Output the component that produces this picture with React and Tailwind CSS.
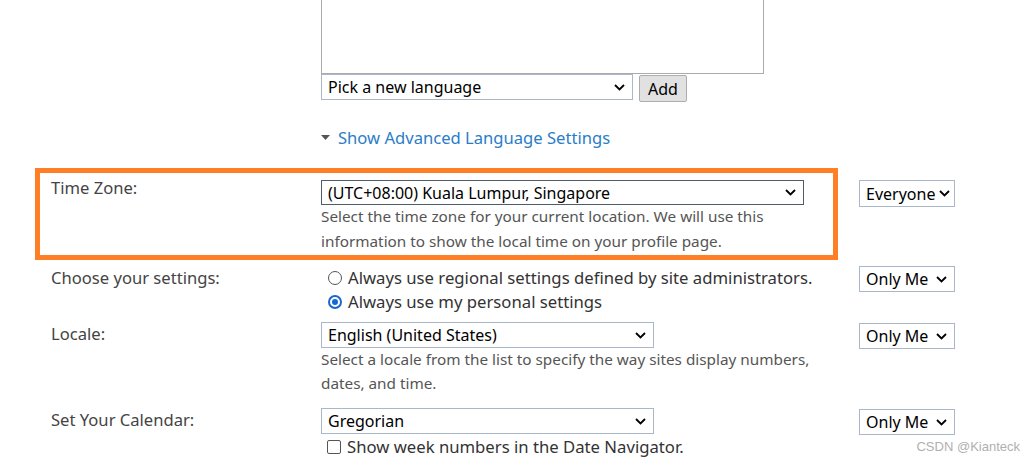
import React from 'react';

const font = { fontFamily: '"Noto Sans", "Open Sans", Arial, sans-serif' };

// Fake Windows-style select box
const Select = ({ value, className }) => (
  <div className={`flex items-center justify-between bg-white border pl-[6px] pr-[7px] text-[16px] text-black ${className}`}>
    <span className="whitespace-nowrap">{value}</span>
    <svg width="11" height="7" viewBox="0 0 11 7" className="shrink-0 ml-[4px]">
      <path d="M1 1l4.5 4.5L10 1" fill="none" stroke="#000" strokeWidth="1.8" />
    </svg>
  </div>
);

const Radio = ({ checked }) =>
  checked ? (
    <span className="inline-flex items-center justify-center w-[14px] h-[14px] rounded-full border-2 border-[#1767d2] bg-white">
      <span className="w-[6px] h-[6px] rounded-full bg-[#1767d2]" />
    </span>
  ) : (
    <span className="inline-block w-[14px] h-[14px] rounded-full border border-[#555] bg-white" />
  );

const Row = ({ label, children, perm, permClass, labelClass, boxClass, rowClass }) => (
  <div className={`flex ${rowClass}`}>
    <div className={`w-[803px] ml-[35px] flex ${boxClass}`}>
      <div className={`w-[270px] shrink-0 text-[16.6px] leading-[24px] text-[#444] ${labelClass}`}>{label}</div>
      <div className="flex-1">{children}</div>
    </div>
    <div className="ml-[21px]">
      <Select value={perm} className={`w-[96px] border-[#a9b8c8] pl-[5px] pr-[6px] ${permClass}`} />
    </div>
  </div>
);

export default function App() {
  return (
    <div className="relative w-[1036px] h-[462px] overflow-hidden bg-white" style={font}>
      {/* language picker */}
      <div className="pl-[321px]">
        <div className="w-[443px] h-[74px] border border-t-0 border-[#ababab]" />
        <div className="flex items-start gap-[6px]">
          <Select value="Pick a new language" className="w-[312px] h-[26px] border-[#a9b8c8]" />
          <button className="w-[48px] h-[27px] mt-[1px] bg-[#e1e1e1] border border-[#adadad] rounded-[2px] text-[16px] text-black leading-none">
            Add
          </button>
        </div>
        <div className="mt-[24px] h-[24px] flex items-center gap-[8px]">
          <svg width="9" height="6" viewBox="0 0 9 6"><path d="M0 0h9L4.5 5z" fill="#555" /></svg>
          <span className="text-[16.6px] text-[#2a7dc8]">Show Advanced Language Settings</span>
        </div>
      </div>

      {/* time zone, highlighted */}
      <Row
        label="Time Zone:"
        perm="Everyone"
        rowClass="mt-[18px]"
        boxClass="border-[5px] border-[#ff7f27] pl-[11px] pt-[7px] h-[92px]"
        labelClass="-mt-[4px]"
        permClass="h-[27px] mt-[12px]"
      >
        <Select value="(UTC+08:00) Kuala Lumpur, Singapore" className="w-[483px] h-[25px] border-[#4d5d6c]" />
        <p className="-mt-[1px] text-[15.3px] leading-[25px] text-[#555]">
          Select the time zone for your current location. We will use this
          <br />
          information to show the local time on your profile page.
        </p>
      </Row>

      {/* regional settings */}
      <Row label="Choose your settings:" perm="Only Me" rowClass="mt-[6px]" boxClass="pl-[16px]" permClass="h-[26px]">
        <div className="text-[16.7px] leading-[24px] text-[#333]">
          <div className="flex items-center gap-[6px] pl-[7px]">
            <Radio />
            <span>Always use regional settings defined by site administrators.</span>
          </div>
          <div className="flex items-center gap-[6px] pl-[7px]">
            <Radio checked />
            <span>Always use my personal settings</span>
          </div>
        </div>
      </Row>

      {/* locale */}
      <Row label="Locale:" perm="Only Me" rowClass="mt-[8px]" boxClass="pl-[16px]" permClass="h-[26px] mt-[1px]">
        <Select value="English (United States)" className="w-[333px] h-[26px] border-[#a9b8c8]" />
        <p className="-mt-[1px] text-[15.3px] leading-[24px] text-[#555]">
          Select a locale from the list to specify the way sites display numbers,
          <br />
          dates, and time.
        </p>
      </Row>

      {/* calendar */}
      <Row label="Set Your Calendar:" perm="Only Me" rowClass="mt-[13px]" boxClass="pl-[16px]" permClass="h-[26px] mt-[1px]">
        <Select value="Gregorian" className="w-[333px] h-[26px] border-[#a9b8c8]" />
        <div className="flex items-center gap-[6px] pl-[6px] pt-[1px] text-[16.7px] leading-[24px] text-[#333]">
          <span className="inline-block w-[14px] h-[14px] rounded-[2px] border border-[#555] bg-white" />
          <span>Show week numbers in the Date Navigator.</span>
        </div>
      </Row>

      <div
        className="absolute right-[16px] bottom-[6px] text-[13px] text-[#b0b0b0]"
        style={{ fontFamily: '"Liberation Sans", Arial, sans-serif' }}
      >
        CSDN @Kianteck
      </div>
    </div>
  );
}
